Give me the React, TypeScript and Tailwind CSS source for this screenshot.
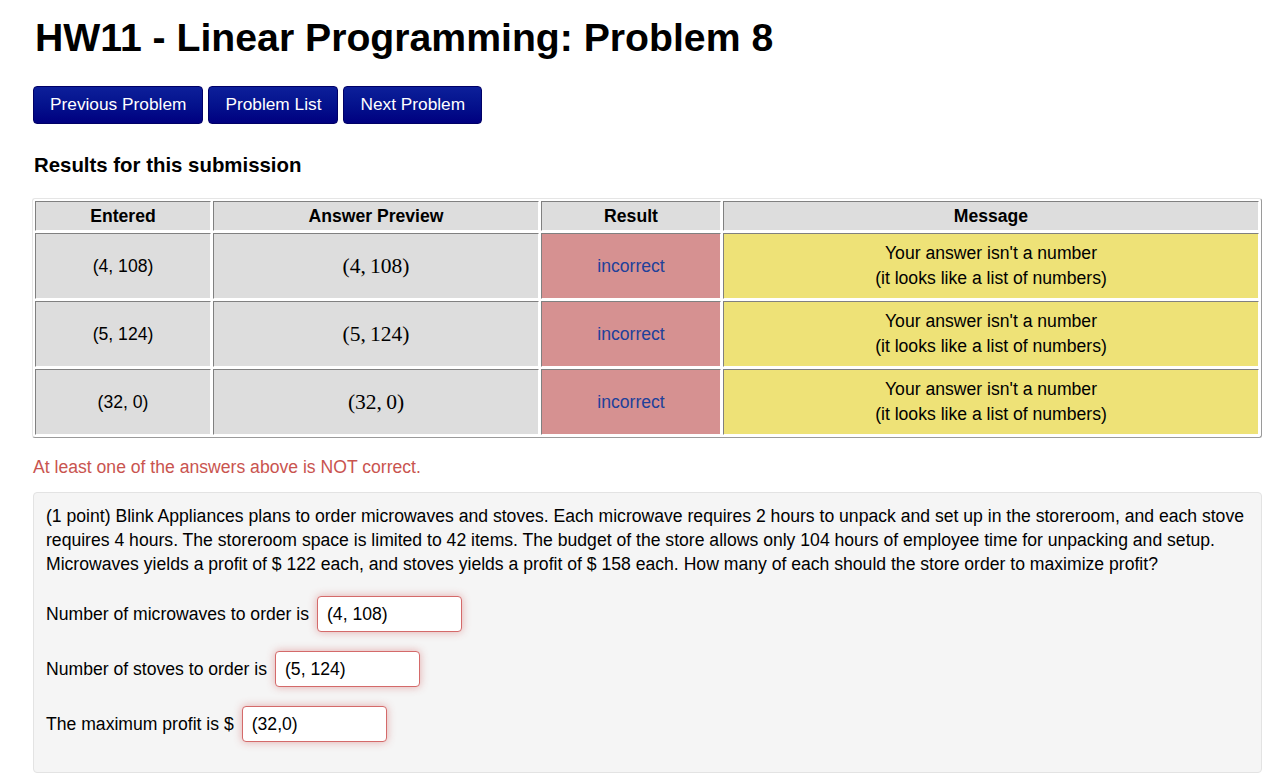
import React from 'react';

const rows = [
  { entered: '(4, 108)', preview: '(4,\u2009108)' },
  { entered: '(5, 124)', preview: '(5,\u2009124)' },
  { entered: '(32, 0)', preview: '(32,\u20090)' },
];

const answers = [
  { label: 'Number of microwaves to order is', value: '(4, 108)' },
  { label: 'Number of stoves to order is', value: '(5, 124)' },
  { label: 'The maximum profit is $', value: '(32,0)' },
];

function NavButton({ children }: { children: React.ReactNode }) {
  return (
    <button className="h-[38px] px-[16px] rounded-[4px] border border-[#000066] bg-gradient-to-b from-[#0d1f9a] to-[#000080] text-white text-[17.3px] leading-none">
      {children}
    </button>
  );
}

const th = 'h-[30px] bg-[#dddddd] border-t border-l border-t-[#808080] border-l-[#808080] border-b border-r border-b-white border-r-white font-bold text-[17.6px] text-center';
const td = 'h-[66px] border-t border-l border-t-[#808080] border-l-[#808080] border-b border-r border-b-white border-r-white text-center';

export default function App() {
  return (
    <div className="min-h-screen bg-white text-black font-['Liberation_Sans',Arial,sans-serif] text-[17.6px] px-[33px] pt-[15px]">
      <h1 className="text-[39.2px] font-bold leading-[46px] ml-[2px]">HW11 - Linear Programming: Problem 8</h1>

      <div className="flex gap-[5px] mt-[25px]">
        <NavButton>Previous Problem</NavButton>
        <NavButton>Problem List</NavButton>
        <NavButton>Next Problem</NavButton>
      </div>

      <h2 className="text-[20.4px] font-bold mt-[29px] ml-[1px] leading-[24px]">Results for this submission</h2>

      <table className="w-[1230px] -ml-[1px] mt-[21px] border-separate border-spacing-[2px] border border-t-[#e5e5e5] border-l-[#e5e5e5] border-b-[#9a9a9a] border-r-[#9a9a9a] rounded-[3px]">
        <thead>
          <tr>
            <th className={`${th} w-[176px]`}>Entered</th>
            <th className={`${th} w-[326px]`}>Answer Preview</th>
            <th className={`${th} w-[180px]`}>Result</th>
            <th className={th}>Message</th>
          </tr>
        </thead>
        <tbody>
          {rows.map((r) => (
            <tr key={r.entered}>
              <td className={`${td} bg-[#dddddd]`}>{r.entered}</td>
              <td className={`${td} bg-[#dddddd] font-['Liberation_Serif','Times_New_Roman',serif] text-[21.5px]`}>
                {r.preview}
              </td>
              <td className={`${td} bg-[#d69191] text-[#21409a]`}>incorrect</td>
              <td className={`${td} bg-[#eee277] leading-[25px]`}>
                Your answer isn't a number
                <br />
                (it looks like a list of numbers)
              </td>
            </tr>
          ))}
        </tbody>
      </table>

      <p className="text-[#c9544f] mt-[17px] leading-[24px]">At least one of the answers above is NOT correct.</p>

      <div className="w-[1229px] mt-[13px] bg-[#f5f5f5] border border-[#e3e3e3] rounded-[4px] px-[12px] pt-[11px] pb-[30px] leading-[24px]">
        <p>
          (1 point) Blink Appliances plans to order microwaves and stoves. Each microwave requires 2 hours to unpack and
          set up in the storeroom, and each stove requires 4 hours. The storeroom space is limited to 42 items. The budget
          of the store allows only 104 hours of employee time for unpacking and setup. Microwaves yields a profit of $ 122
          each, and stoves yields a profit of $ 158 each. How many of each should the store order to maximize profit?
        </p>
        <div className="flex flex-col gap-[19px] mt-[20px]">
          {answers.map((a) => (
            <div key={a.label} className="flex items-center">
              <span>{a.label}</span>
              <div className="ml-[8px] w-[145px] h-[36px] bg-white border border-[#d46a6a] rounded-[4px] shadow-[0_0_8px_rgba(206,80,80,0.45)] flex items-center px-[9px]">
                {a.value}
              </div>
            </div>
          ))}
        </div>
      </div>
    </div>
  );
}
